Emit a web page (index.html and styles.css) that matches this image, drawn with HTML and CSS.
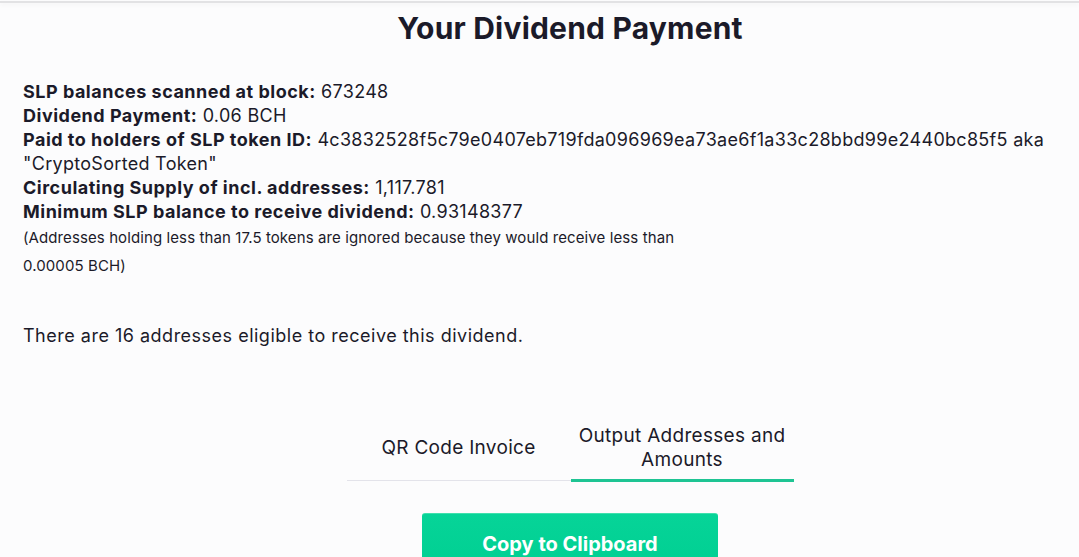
FILE: index.html
```html
<!DOCTYPE html>
<html>
<head>
<meta charset="utf-8">
<link rel="stylesheet" href="styles.css">
</head>
<body>
<div class="topline"></div>
<main class="page">
  <h1 class="title">Your Dividend Payment</h1>
  <div class="info">
    <div><b>SLP balances scanned at block:</b> 673248</div>
    <div><b>Dividend Payment:</b> 0.06 BCH</div>
    <div><b>Paid to holders of SLP token ID:</b> 4c3832528f5c79e0407eb719fda096969ea73ae6f1a33c28bbd99e2440bc85f5 aka "CryptoSorted Token"</div>
    <div><b>Circulating Supply of incl. addresses:</b> 1,117.781</div>
    <div><b>Minimum SLP balance to receive dividend:</b> 0.93148377</div>
    <p class="note">(Addresses holding less than 17.5 tokens are ignored because they would receive less than 0.00005 BCH)</p>
  </div>
  <p class="eligible">There are 16 addresses eligible to receive this dividend.</p>
  <div class="tabs">
    <div class="tab">QR Code Invoice</div>
    <div class="tab active">Output Addresses and Amounts</div>
  </div>
  <div class="actions">
    <button class="copy">Copy to Clipboard</button>
  </div>
</main>
</body>
</html>
```
FILE: styles.css
```css
html, body {
  margin: 0;
  padding: 0;
  overflow: hidden;
  background: #fcfcfd;
}
body {
  font-family: Inter, "Liberation Sans", sans-serif;
  color: #1b1a29;
}
.topline {
  height: 2px;
  background: #e2e2e4;
  box-shadow: 0 2px 4px rgba(0,0,0,0.05);
  margin-top: 1px;
}
.page {
  width: 1117px;
  box-sizing: border-box;
  padding-left: 23px;
}
.title {
  font-size: 30px;
  font-weight: 700;
  letter-spacing: 0.2px;
  text-align: center;
  margin: 7px 0 0 0;
  line-height: 36px;
}
.info {
  margin-top: 34px;
  font-size: 18px;
  line-height: 24px;
  letter-spacing: 0.3px;
  width: 1040px;
}
.info b {
  font-weight: 700;
  letter-spacing: 0.5px;
  line-height: 24px;
}
.note {
  font-size: 15px;
  line-height: 28px;
  letter-spacing: 0.1px;
  margin: 0;
  width: 685px;
}
.eligible {
  font-size: 18px;
  letter-spacing: 0.5px;
  margin: 44px 0 0 0;
  line-height: 24px;
}
.tabs {
  display: flex;
  justify-content: center;
  align-items: flex-start;
  margin-top: 64px;
}
.tab {
  width: 224px;
  height: 69px;
  box-sizing: border-box;
  font-size: 19px;
  line-height: 24px;
  letter-spacing: 0.3px;
  text-align: center;
  padding: 4px 2px 0;
  display: flex;
  align-items: center;
  justify-content: center;
  border-bottom: 1px solid #e3e3ea;
}
.tab.active {
  height: 70px;
  width: 223px;
  border-bottom: 3px solid #1ec493;
}
.actions {
  display: flex;
  justify-content: center;
  margin-top: 31px;
}
.copy {
  width: 296px;
  height: 60px;
  border: none;
  border-top: 1px solid #3ee0ac;
  border-radius: 3px;
  background: linear-gradient(#06d498, #00cf92);
  color: #fff;
  font-family: inherit;
  font-size: 20px;
  font-weight: 700;
  letter-spacing: 0;
  padding: 0;
}
```
